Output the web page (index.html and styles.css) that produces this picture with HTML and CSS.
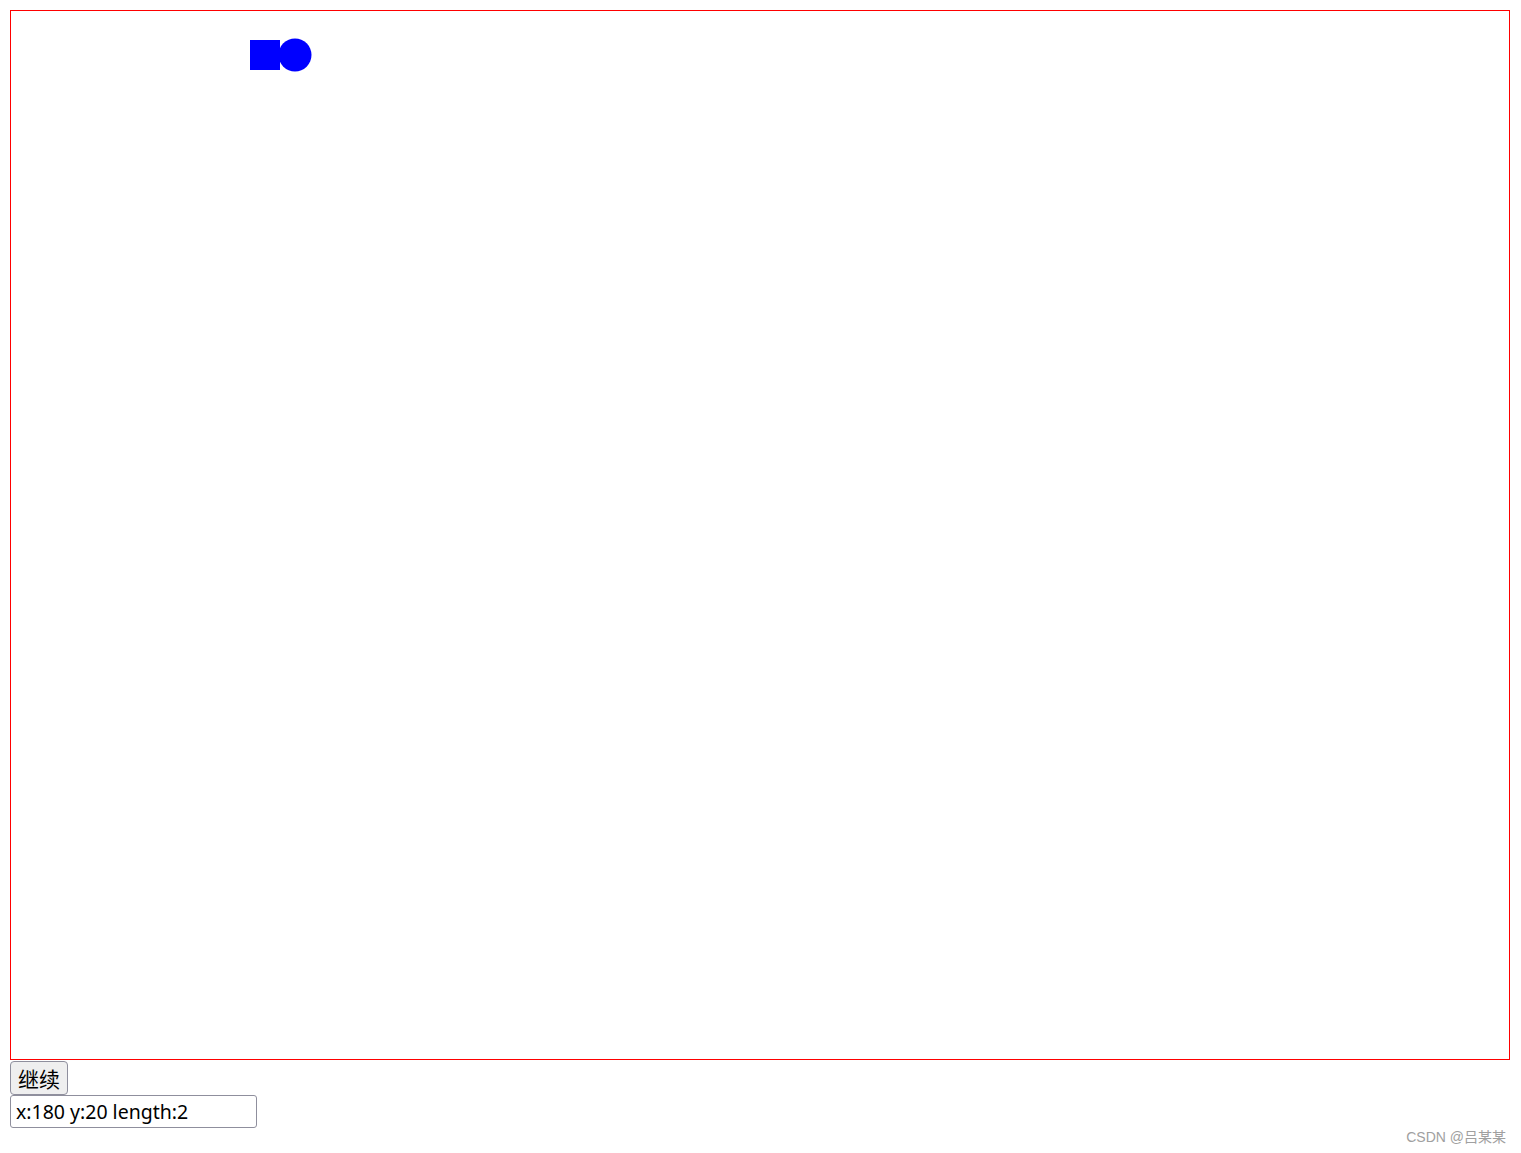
FILE: index.html
```html
<!DOCTYPE html>
<html>
<head>
<meta charset="utf-8">
<link rel="stylesheet" href="styles.css">
</head>
<body>
<div class="stage">
  <svg class="scene" width="1498" height="1048" viewBox="0 0 1498 1048">
    <rect x="239" y="29" width="30" height="30" fill="#0000ff"/>
    <circle cx="284" cy="44" r="16.5" fill="#0000ff"/>
  </svg>
</div>
<div class="controls">
  <button class="btn">继续</button>
  <input class="info" type="text" value="x:180 y:20 length:2">
</div>
<div class="mark">CSDN @吕某某</div>
</body>
</html>
```

FILE: styles.css
```css
html, body {
  margin: 0;
  padding: 0;
  background: #ffffff;
}
body {
  padding: 10px;
  font-family: "Noto Sans", "Noto Sans CJK SC", sans-serif;
}
.stage {
  width: 1498px;
  height: 1048px;
  border: 1px solid #ff0000;
}
.scene {
  display: block;
}
.controls {
  display: flex;
  flex-direction: column;
  align-items: flex-start;
  margin-top: 1px;
}
.btn {
  height: 34px;
  width: 58px;
  padding: 0;
  font-family: "Noto Sans CJK SC", sans-serif;
  font-size: 21px;
  color: #000;
  background: #efefef;
  border: 1px solid #8f8f9d;
  border-radius: 4px;
  line-height: 1;
}
.info {
  box-sizing: border-box;
  width: 247px;
  height: 33px;
  margin: 0;
  padding: 0 5px;
  font-family: "Noto Sans", sans-serif;
  font-size: 19.5px;
  color: #000;
  border: 1px solid #8f8f9d;
  border-radius: 3px;
  background: #fff;
}
.mark {
  position: absolute;
  right: 15px;
  top: 1126px;
  font-family: "Liberation Sans", "Noto Sans CJK SC", sans-serif;
  font-size: 14px;
  color: #a0a0a0;
}
```
